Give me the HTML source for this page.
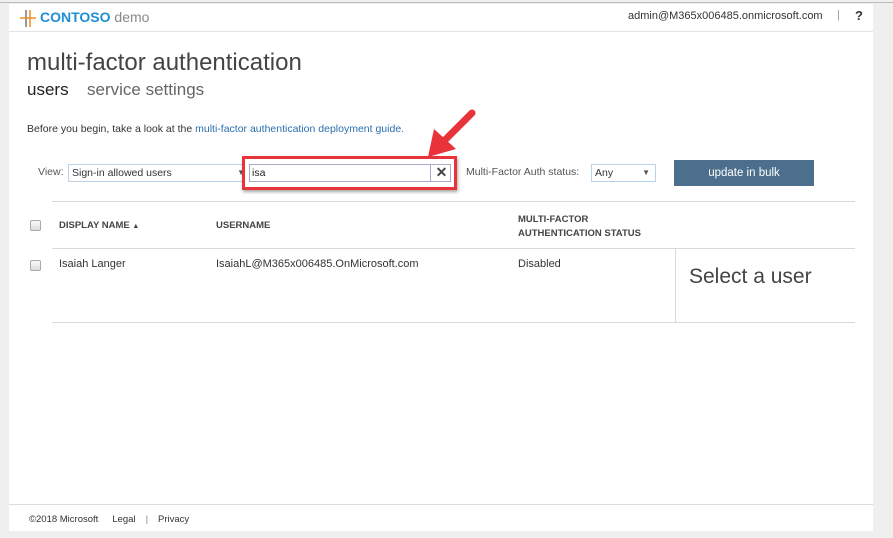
<!DOCTYPE html>
<html><head><style>
body{margin:0;width:893px;height:538px;background:#efefef;font-family:"Segoe UI","Liberation Sans",sans-serif;position:relative;overflow:hidden}
.a{position:absolute;white-space:nowrap}
.main{position:absolute;left:9px;top:4px;width:864px;height:527px;background:#fff}
.hl{position:absolute;height:1px;background:#d9d9d9}
.cb{position:absolute;width:9px;height:9px;border:1px solid #aaa;border-radius:2px;background:linear-gradient(#fafafa,#ddd)}
.th{font-size:9.5px;font-weight:bold;color:#444}
.td{font-size:11px;color:#333}
</style></head><body>
<div style="position:absolute;left:0;top:2px;width:893px;height:1px;background:#bbb"></div>
<div class="main"></div>
<div class="hl" style="left:9px;top:31px;width:864px;background:#e3e3e3"></div>
<svg class="a" style="left:20px;top:10px" width="16" height="17"><g stroke-width="1.5"><line x1="6" y1="0" x2="6" y2="17" stroke="#777"/><line x1="10" y1="0" x2="10" y2="17" stroke="#f08a24"/><line x1="0" y1="8" x2="16" y2="8" stroke="#f08a24"/></g></svg>
<div class="a" style="left:40px;top:9px;font-size:14px;font-weight:bold;color:#1e8fd6">CONTOSO <span style="font-weight:normal;color:#888">demo</span></div>
<div class="a" style="left:628px;top:10px;font-size:11px;color:#333">admin@M365x006485.onmicrosoft.com</div>
<div class="a" style="left:837px;top:9px;font-size:11px;color:#999">|</div>
<div class="a" style="left:855px;top:8px;font-size:13px;font-weight:bold;color:#333">?</div>
<div class="a" style="left:27px;top:49px;font-size:24px;color:#444">multi-factor authentication</div>
<div class="a" style="left:27px;top:80px;font-size:17px;color:#222">users</div>
<div class="a" style="left:87px;top:80px;font-size:17px;color:#666">service settings</div>
<div class="a" style="left:27px;top:123px;font-size:10.5px;color:#333">Before you begin, take a look at the <span style="color:#2a6fb0">multi-factor authentication deployment guide.</span></div>
<div class="a" style="left:38px;top:166px;font-size:10.5px;color:#555">View:</div>
<div class="a" style="left:68px;top:164px;font-size:10.5px;color:#333;line-height:16px;padding-left:3px;box-sizing:border-box;width:176px;height:18px;border:1px solid #b9d3ea">Sign-in allowed users<span style="position:absolute;right:-2px;top:0;font-size:8px;color:#555">▼</span></div>
<div class="a" style="left:242px;top:156px;width:215px;height:34px;border:3px solid #e8333b;box-sizing:border-box;box-shadow:1px 2px 3px rgba(0,0,0,.35)"></div>
<div class="a" style="left:249px;top:164px;width:202px;height:18px;border:1px solid #aac;box-sizing:border-box;font-size:10.5px;line-height:16px;padding-left:2px;color:#222">isa</div>
<div class="a" style="left:430px;top:164px;width:21px;height:18px;border-left:1px solid #aac;text-align:center;font-size:14px;font-weight:bold;line-height:17px;color:#444">✕</div>
<svg class="a" style="left:420px;top:105px" width="60" height="55"><line x1="52" y1="8" x2="22" y2="38" stroke="#e8333b" stroke-width="7" stroke-linecap="round"/><polygon points="8,52 14,24 36,44" fill="#e8333b"/></svg>
<div class="a" style="left:466px;top:166px;font-size:10.5px;color:#555">Multi-Factor Auth status:</div>
<div class="a" style="left:591px;top:164px;width:65px;height:18px;border:1px solid #b9d3ea;box-sizing:border-box;font-size:10.5px;line-height:16px;padding-left:3px;color:#333">Any<span style="position:absolute;right:5px;top:0;font-size:8px;color:#555">▼</span></div>
<div class="a" style="left:674px;top:160px;width:140px;height:26px;background:#4b6f8c;color:#fff;font-size:11.5px;text-align:center;line-height:26px">update in bulk</div>
<div class="hl" style="left:52px;top:201px;width:803px"></div>
<div class="cb" style="left:30px;top:220px"></div>
<div class="a th" style="left:59px;top:220px">DISPLAY NAME <span style="font-size:7px">▲</span></div>
<div class="a th" style="left:216px;top:220px">USERNAME</div>
<div class="a th" style="left:518px;top:213px;line-height:14px">MULTI-FACTOR<br>AUTHENTICATION STATUS</div>
<div class="hl" style="left:52px;top:248px;width:803px"></div>
<div class="cb" style="left:30px;top:260px"></div>
<div class="a td" style="left:59px;top:258px">Isaiah Langer</div>
<div class="a td" style="left:216px;top:258px">IsaiahL@M365x006485.OnMicrosoft.com</div>
<div class="a td" style="left:518px;top:258px">Disabled</div>
<div class="a" style="left:675px;top:249px;width:1px;height:73px;background:#d9d9d9"></div>
<div class="a" style="left:689px;top:265px;font-size:21px;color:#444">Select a user</div>
<div class="hl" style="left:52px;top:322px;width:803px"></div>
<div class="hl" style="left:9px;top:504px;width:864px;background:#ddd"></div>
<div class="a" style="left:29px;top:514px;font-size:9.5px;color:#333">©2018 Microsoft<span style="margin-left:14px">Legal</span><span style="margin:0 10px;color:#888">|</span>Privacy</div>
</body></html>
